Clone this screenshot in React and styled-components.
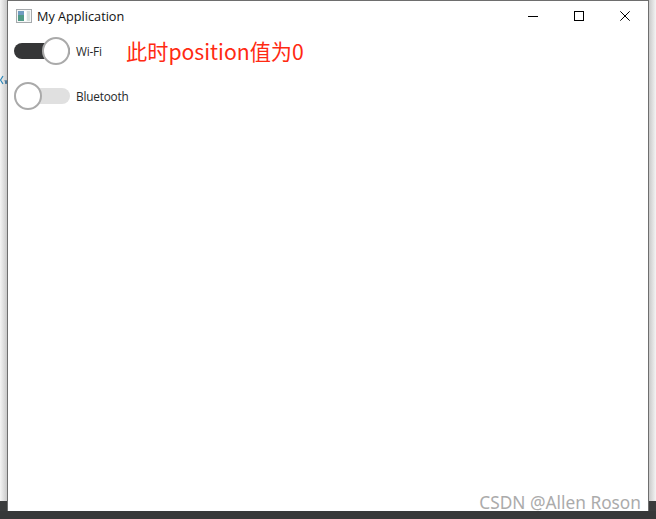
import styled, { createGlobalStyle } from 'styled-components'

const GlobalStyle = createGlobalStyle`
    html, body {
        margin: 0;
        padding: 0;
        background: #373839;
    }
`

const Desktop = styled.div`
    display: grid;
    grid-template-columns: 7px 642px 7px;
    grid-template-rows: 511px 8px;
    height: 519px;
    position: relative;
    overflow: hidden;
    width: 656px;
`

const Strip = styled.div`
    background:
        linear-gradient(to bottom, transparent 501px, #3b3c3d 501px),
        linear-gradient(
            to ${props => props.side === 'left' ? 'right' : 'left'},
            #f4f4f4,
            #c9c9c9
        );
    position: relative;
`

const StrayGlyph = styled.svg`
    height: 14px;
    left: 0;
    position: absolute;
    top: 74px;
    width: 7px;
`

const Window = styled.div`
    background: #fff;
    border: 1px solid #6e6e6e;
    border-bottom: 0;
    box-sizing: border-box;
    display: flex;
    flex-direction: column;
`

const TitleBar = styled.div`
    align-items: center;
    display: flex;
    height: 29px;
    padding-left: 8px;
`

const AppIcon = styled.svg`
    height: 14px;
    margin-right: 5px;
    width: 16px;
`

const Title = styled.span`
    color: #111;
    flex: 1;
    font-family: "Open Sans", "Noto Sans", sans-serif;
    font-size: 12.7px;
`

const Controls = styled.div`
    align-items: center;
    display: flex;
`

const ControlButton = styled.div`
    align-items: center;
    display: flex;
    height: 29px;
    justify-content: center;
    width: 46px;
`

const ControlIcon = styled.svg`
    height: 10px;
    width: 10px;
`

const Content = styled.div`
    display: flex;
    flex-direction: column;
    gap: 17px;
    padding: 7px 0 0 6px;
`

const Row = styled.div`
    align-items: center;
    display: flex;
    height: 28px;
`

const Track = styled.div`
    background: ${props => props.checked ? '#353637' : '#e0e0e0'};
    border-radius: 8px;
    height: 16px;
    position: relative;
    width: 56px;
`

const Knob = styled.div`
    background: #fff;
    border: 2px solid #aaa;
    border-radius: 50%;
    box-sizing: border-box;
    height: 28px;
    left: ${props => props.checked ? '28px' : '0'};
    position: absolute;
    top: -6px;
    width: 28px;
`

const Label = styled.span`
    color: #26282a;
    font-family: "Open Sans", "Noto Sans", sans-serif;
    font-size: 11.8px;
    letter-spacing: -0.2px;
    margin-left: 6px;
    min-width: 45px;
`

const Note = styled.span`
    color: #ff2a12;
    font-family: "Noto Sans CJK SC", "Noto Sans", sans-serif;
    font-size: 21.2px;
    margin-left: 5px;
    margin-top: -1px;
`

const Watermark = styled.span`
    bottom: 5px;
    color: #ababab;
    font-family: "Noto Sans", sans-serif;
    font-size: 17.3px;
    position: absolute;
    right: 15px;
`

const Switch = ({ checked, label, children }) => (
    <Row>
        <Track checked={checked}>
            <Knob checked={checked} />
        </Track>
        <Label>{label}</Label>
        {children}
    </Row>
)

export default function App() {
    return (
        <>
            <GlobalStyle />
            <Desktop>
                <Strip side="left">
                    <StrayGlyph viewBox="0 0 7 14">
                        <path d="M3 2 L0.5 6 L3 10" fill="none" stroke="#2a86b8" strokeWidth="1.2" />
                        <path d="M5 6 L6 10 L7 6" fill="none" stroke="#3a6f96" strokeWidth="1" />
                    </StrayGlyph>
                </Strip>
                <Window>
                    <TitleBar>
                        <AppIcon viewBox="0 0 16 14">
                            <rect x="0.5" y="0.5" width="15" height="13" fill="#f4f6f6" stroke="#a5a9ac" />
                            <rect x="2" y="2" width="6" height="10" fill="#4f9a86" />
                            <rect x="2" y="2" width="6" height="4" fill="#6f9cc0" />
                            <rect x="8" y="2" width="2" height="10" fill="#ffffff" />
                            <rect x="11" y="2" width="3" height="10" fill="#d5dfdc" />
                        </AppIcon>
                        <Title>My Application</Title>
                        <Controls>
                            <ControlButton>
                                <ControlIcon viewBox="0 0 10 10">
                                    <path d="M0 5.5 H10" stroke="#000" strokeWidth="1" />
                                </ControlIcon>
                            </ControlButton>
                            <ControlButton>
                                <ControlIcon viewBox="0 0 10 10">
                                    <rect x="0.5" y="0.5" width="9" height="9" fill="none" stroke="#000" />
                                </ControlIcon>
                            </ControlButton>
                            <ControlButton>
                                <ControlIcon viewBox="0 0 10 10">
                                    <path d="M0.3 0.3 L9.7 9.7 M9.7 0.3 L0.3 9.7" stroke="#000" strokeWidth="1" />
                                </ControlIcon>
                            </ControlButton>
                        </Controls>
                    </TitleBar>
                    <Content>
                        <Switch checked label="Wi-Fi">
                            <Note>此时position值为0</Note>
                        </Switch>
                        <Switch label="Bluetooth" />
                    </Content>
                </Window>
                <Strip side="right" />
                <Watermark>CSDN @Allen Roson</Watermark>
            </Desktop>
        </>
    )
}
